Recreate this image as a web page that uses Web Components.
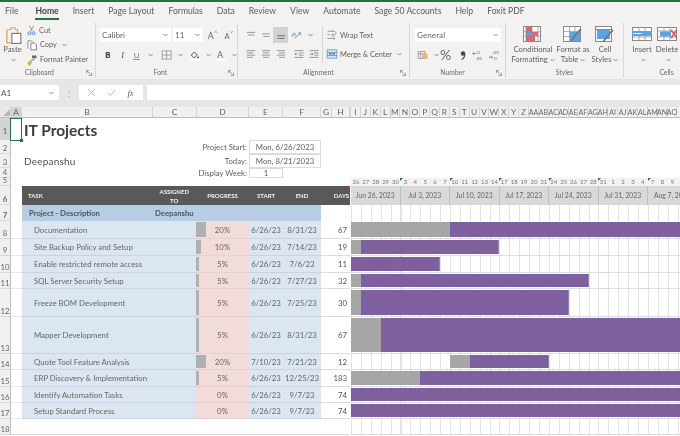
<!DOCTYPE html>
<html>
<head>
<meta charset="utf-8">
<title>IT Projects</title>
<style>
html,body{margin:0;padding:0;width:680px;height:436px;overflow:hidden;background:#fff}
body{font-family:Lato,"Open Sans",sans-serif;color:#5f5f5f;filter:blur(.3px)}
</style>
</head>
<body>
<excel-tabs></excel-tabs>
<excel-ribbon>
  <ribbon-group width="96" label="Clipboard" pad="16" launcher>
    <div style="display:flex;padding:0 0 0 2px">
      <big-btn icon="paste" label="Paste" sub=" " width="21" style="margin-top:2px"></big-btn>
      <div style="display:flex;flex-direction:column;margin-left:3px">
        <tool-btn icon="cut" label="Cut" height="14"></tool-btn>
        <tool-btn icon="copy" label="Copy" chevron height="15"></tool-btn>
        <tool-btn icon="painter" label="Format Painter" height="15"></tool-btn>
      </div>
    </div>
  </ribbon-group>
  <ribbon-group width="142" label="Font" pad="12" launcher>
    <div style="padding:5px 0 0 4px">
      <div style="display:flex;align-items:center;height:14px">
        <drop-box text="Calibri" width="71"></drop-box>
        <drop-box text="11" width="30" style="margin-left:2px"></drop-box>
        <tool-btn icon="growfont" width="16" height="14" style="margin-left:1px"></tool-btn>
        <tool-btn icon="shrinkfont" width="17" height="14"></tool-btn>
      </div>
      <div style="display:flex;align-items:center;height:16px;margin-top:5px">
        <tool-btn icon="bold" width="15" height="16"></tool-btn>
        <tool-btn icon="italic" width="15" height="16"></tool-btn>
        <tool-btn icon="underline" chevron width="24" height="16"></tool-btn>
        <tool-btn icon="borders" chevron width="29" height="16" style="margin-left:3px"></tool-btn>
        <tool-btn icon="fill" chevron width="27" height="16"></tool-btn>
        <tool-btn icon="fontcolor" chevron width="25" height="16"></tool-btn>
      </div>
    </div>
  </ribbon-group>
  <ribbon-group width="172" label="Alignment" pad="10" launcher>
    <div style="display:flex;padding:4px 0 0 5px">
      <div style="width:78px">
        <div style="display:flex;height:16px">
          <tool-btn icon="alignt" width="15" height="16"></tool-btn>
          <tool-btn icon="alignm" width="15" height="16"></tool-btn>
          <tool-btn icon="alignb" width="15" height="16" active></tool-btn>
          <tool-btn icon="orient" chevron width="24" height="16" style="margin-left:2px"></tool-btn>
        </div>
        <div style="display:flex;height:16px;margin-top:3px">
          <tool-btn icon="left" width="15" height="16"></tool-btn>
          <tool-btn icon="center" width="15" height="16"></tool-btn>
          <tool-btn icon="right" width="15" height="16"></tool-btn>
          <tool-btn icon="indentl" width="15" height="16" style="margin-left:3px"></tool-btn>
          <tool-btn icon="indentr" width="15" height="16"></tool-btn>
        </div>
      </div>
      <div style="border-left:1px solid #d4d4d4;margin-left:1px;padding-left:3px;height:36px">
        <tool-btn icon="wrap" label="Wrap Text" height="16"></tool-btn>
        <tool-btn icon="merge" label="Merge &amp; Center" chevron height="16" style="margin-top:3px"></tool-btn>
      </div>
    </div>
  </ribbon-group>
  <ribbon-group width="96" label="Number" pad="10" launcher>
    <div style="padding:5px 0 0 5px">
      <drop-box text="General" width="86"></drop-box>
      <div style="display:flex;height:16px;margin-top:5px">
        <tool-btn icon="money" chevron width="25" height="16"></tool-btn>
        <tool-btn icon="percent" width="15" height="16" size="15"></tool-btn>
        <tool-btn icon="comma" width="15" height="16"></tool-btn>
        <tool-btn icon="incdec" width="16" height="16"></tool-btn>
        <tool-btn icon="decdec" width="16" height="16"></tool-btn>
      </div>
    </div>
  </ribbon-group>
  <ribbon-group width="118" label="Styles">
    <div style="display:flex;padding:3px 0 0 7px">
      <big-btn icon="cond" label="Conditional" sub="Formatting" chevron width="40"></big-btn>
      <big-btn icon="fmttable" label="Format as" sub="Table" chevron width="40"></big-btn>
      <big-btn icon="cellstyles" label="Cell" sub="Styles" chevron width="24"></big-btn>
    </div>
  </ribbon-group>
  <ribbon-group width="86" label="Cells" last>
    <div style="display:flex;padding:3px 0 0 6px">
      <big-btn icon="insert" label="Insert" sub=" " width="24"></big-btn>
      <big-btn icon="delete" label="Delete" sub=" " width="26"></big-btn>
    </div>
  </ribbon-group>
</excel-ribbon>
<formula-bar></formula-bar>
<sheet-columns></sheet-columns>
<sheet-title></sheet-title>
<gantt-header></gantt-header>
<summary-row></summary-row>
<task-row n="8" h="18" task="Documentation" pct="20" start="6/26/23" end="8/31/23" days="67" done="10" rest="40"></task-row>
<task-row n="9" h="17" task="Site Backup Policy and Setup" pct="10" start="6/26/23" end="7/14/23" days="19" done="1" rest="14"></task-row>
<task-row n="10" h="17" task="Enable restricted remote access" pct="5" start="6/26/23" end="7/6/23" days="11" done="0" rest="9"></task-row>
<task-row n="11" h="16" task="SQL Server Security Setup" pct="5" start="6/26/23" end="7/27/23" days="32" done="1" rest="23"></task-row>
<task-row n="12" h="28" task="Freeze BOM Development" pct="5" start="6/26/23" end="7/25/23" days="30" done="1" rest="21"></task-row>
<task-row n="13" h="37" task="Mapper Development" pct="5" start="6/26/23" end="8/31/23" days="67" done="3" rest="40"></task-row>
<task-row n="14" h="16" task="Quote Tool Feature Analysis" pct="20" start="7/10/23" end="7/21/23" days="12" offset="10" done="2" rest="8"></task-row>
<task-row n="15" h="17" task="ERP Discovery &amp; Implementation" pct="5" start="6/26/23" end="12/25/23" days="183" done="7" rest="40"></task-row>
<task-row n="16" h="16" task="Identify Automation Tasks" pct="0" start="6/26/23" end="9/7/23" days="74" done="0" rest="40"></task-row>
<task-row n="17" h="16" task="Setup Standard Process" pct="0" start="6/26/23" end="9/7/23" days="74" done="0" rest="40"></task-row>
<task-row n="18" h="16"></task-row>
<script>
// icones du ruban, en 16x16
const ICONS = {
  paste: '<path d="M3 4h3V2.500h4V4h2v3" fill="none" stroke="#e2a35a"/><path d="M2.500 4v12h4" fill="none" stroke="#e2a35a" stroke-width="1.200"/><rect x="7" y="7.500" width="8" height="9" fill="#fff" stroke="#777"/>',
  cut: '<path d="M5 1l4 8M11 1L7 9" stroke="#777" fill="none"/><circle cx="5" cy="12" r="2.200" fill="none" stroke="#3f7fc4" stroke-width="1.300"/><circle cx="11" cy="12" r="2.200" fill="none" stroke="#3f7fc4" stroke-width="1.300"/>',
  copy: '<path d="M2.500 13V2.500h5l2 2" fill="none" stroke="#777"/><path d="M6.500 5.500h5l2.500 2.500v6.500H6.500z" fill="#fff" stroke="#666"/>',
  painter: '<path d="M8 2h6v3.500H8z" fill="#666"/><path d="M10.500 5.500v2.500H7l-1 2" fill="none" stroke="#666"/><path d="M2 11l4-2 2 2-2 4H3z" fill="#e5a24a"/>',
  growfont: '<text x="1" y="13" font-size="13" fill="#666" font-family="Lato">A</text><path d="M11 4l2-2 2 2" fill="none" stroke="#4a86c5"/>',
  shrinkfont: '<text x="2" y="13" font-size="11" fill="#666" font-family="Lato">A</text><path d="M10 2l2 2 2-2" fill="none" stroke="#4a86c5"/>',
  bold: '<text x="4" y="12.500" font-size="11" font-weight="700" fill="#444" font-family="Open Sans">B</text>',
  italic: '<text x="5.500" y="12.500" font-size="11" font-style="italic" fill="#555" font-family="Liberation Serif">I</text>',
  underline: '<text x="3.500" y="11.500" font-size="10.500" fill="#5d6f86" font-family="Open Sans">U</text><path d="M3 14h9" stroke="#5d6f86"/>',
  borders: '<rect x="1.500" y="2.500" width="12" height="11" fill="none" stroke="#8a8a8a"/><path d="M7.500 2.500v11M1.500 8h12" stroke="#8a8a8a"/>',
  fill: '<path d="M3 8l4-4 4 4-4 4z" fill="none" stroke="#555" stroke-width="1.300"/><path d="M12 9c1 1.500 1.500 2 1 3s-2 .500-2-.500z" fill="#555"/><path d="M1 14.500h14" stroke="#fff" stroke-width="2"/>',
  fontcolor: '<text x="3" y="12" font-size="11.500" fill="#666" font-family="Lato">A</text><path d="M1 14.500h14" stroke="#fff" stroke-width="2"/>',
  alignt: '<path d="M2.500 4.500h11M3.500 8h9" stroke="#7a7a7a" fill="none"/>',
  alignm: '<path d="M3 6.500h10M4.500 10h8" stroke="#7a7a7a" fill="none"/>',
  alignb: '<path d="M2.500 9h11M3.500 12.500h9" stroke="#666" stroke-width="1.200" fill="none"/>',
  orient: '<text x="1" y="9" font-size="6" fill="#666" font-family="Lato" transform="rotate(-25 4 9)">ab</text><path d="M5 12l7-6" stroke="#4a86c5" stroke-width="1.200"/><path d="M10 5h3v3" fill="none" stroke="#4a86c5"/>',
  left: '<path d="M2.500 3.500h11M2.500 6.500h8M2.500 9.500h11M2.500 12.500h8" stroke="#7a7a7a" fill="none"/>',
  center: '<path d="M2.500 3.500h11M4 6.500h8M2.500 9.500h11M4 12.500h8" stroke="#7a7a7a" fill="none"/>',
  right: '<path d="M2.500 3.500h11M5.500 6.500h8M2.500 9.500h11M5.500 12.500h8" stroke="#7a7a7a" fill="none"/>',
  indentl: '<path d="M2 3.500h12M8 6.500h6M8 9.500h6M2 12.500h12" stroke="#7a7a7a" fill="none"/><path d="M6.500 8H2.500M4 6.500L2.500 8 4 9.500" stroke="#4a86c5" fill="none"/>',
  indentr: '<path d="M2 3.500h12M8 6.500h6M8 9.500h6M2 12.500h12" stroke="#7a7a7a" fill="none"/><path d="M2 8h4.500M5 6.500L6.500 8 5 9.500" stroke="#4a86c5" fill="none"/>',
  wrap: '<path d="M2 3h9c3 0 3 5 0 5H8M9.500 6L7.500 8l2 2" fill="none" stroke="#5b8ec7"/><path d="M2 7.500h3M2 12.500h9" stroke="#777"/><path d="M8 1.500v2M11 11v3" stroke="#777"/>',
  merge: '<rect x="1.500" y="2.500" width="13" height="11" fill="#d7e6f6" stroke="#5b8ec7"/><path d="M1.500 6h13M1.500 10h13" stroke="#5b8ec7" fill="none"/><path d="M4 8h8M4 8l1.500-1.200M12 8l-1.500-1.200" stroke="#444" fill="none"/>',
  money: '<rect x="1.500" y="3.500" width="9" height="9" fill="none" stroke="#8a8a8a"/><path d="M1.500 6.500h9M5 3.500v9" stroke="#8a8a8a"/><rect x="7" y="6" width="7" height="7" fill="#f3b26b"/>',
  percent: '<text x="0" y="13" font-size="15" fill="#666" font-family="Lato">%</text>',
  comma: '<circle cx="8" cy="6" r="3" fill="#444"/><path d="M10.500 6.500C10.500 10 9 12.500 6 14" fill="none" stroke="#444" stroke-width="1.500"/>',
  incdec: '<path d="M1 6h5M1 6l2-2M1 6l2 2" stroke="#4a86c5" fill="none"/><text x="7" y="7" font-size="6" fill="#777" font-family="Lato">0</text><text x="5" y="14" font-size="6" fill="#777" font-family="Lato">.00</text>',
  decdec: '<path d="M1 11h5M6 11L4 9M6 11l-2 2" stroke="#4a86c5" fill="none"/><text x="6" y="7" font-size="6" fill="#777" font-family="Lato">.00</text><text x="8" y="14" font-size="6" fill="#777" font-family="Lato">0</text>',
  cond: '<rect x=".500" y=".500" width="17" height="15" fill="#fff" stroke="#8a8a8a"/><rect x="3" y="1" width="6" height="5" fill="#ee5f6c"/><rect x="3" y="6" width="6" height="4" fill="#5f9fe0"/><rect x="9" y="6" width="6" height="4" fill="#ee5f6c"/><rect x="3" y="10" width="9" height="5" fill="#ee5f6c"/><path d="M3 .500v15M9 .500v15M15 .500v15M.500 5.800h17M.500 10.200h17" stroke="#8a8a8a" stroke-width=".700"/>',
  fmttable: '<rect x=".500" y=".500" width="17" height="15" fill="#fff" stroke="#8a8a8a"/><path d="M6.500 .500v15M12 .500v15M.500 5.500h17M.500 10.500h17" stroke="#8a8a8a" stroke-width=".700"/><rect x="7" y="6" width="10" height="9" fill="#5ba2e6"/><path d="M8 15l7-9 3-3" stroke="#777" stroke-width="1.800" fill="none"/>',
  cellstyles: '<rect x=".500" y=".500" width="16" height="15" fill="#fff" stroke="#8a8a8a"/><rect x="2" y="4" width="13" height="9" fill="#5ba2e6"/><path d="M.500 3.500h16" stroke="#8a8a8a"/><path d="M8 16l7-9 3-3" stroke="#777" stroke-width="1.800" fill="none"/>',
  insert: '<rect x=".500" y="1.500" width="19" height="13" fill="#fff" stroke="#8a8a8a"/><path d="M7 1.500v13M13 1.500v13M.500 11h19" stroke="#8a8a8a" stroke-width=".700"/><rect x="0" y="5" width="20" height="5" fill="#5ba2e6"/><path d="M1 7.500h9" stroke="#fff"/>',
  'delete': '<rect x=".500" y="1.500" width="19" height="13" fill="#fff" stroke="#8a8a8a"/><path d="M7 1.500v13M13 1.500v13M.500 5h19M.500 11h19" stroke="#8a8a8a" stroke-width=".700"/><rect x="3" y="5.500" width="11" height="5" fill="#5ba2e6"/><path d="M14 4l6 8M20 4l-6 8" stroke="#e0574f" stroke-width="1.600"/>',
}

const CHEVRON = '<svg class="chev" width="5" height="4" viewBox="0 0 5 4"><path d="M.5 1l2 2 2-2" fill="none" stroke="#777" stroke-width=".8"/></svg>'

// colonnes communes aux lignes du tableau : entete, A, B+C, D, E, F, G+H, diagramme
const COLUMNS = '11px 11px 174px 53px 34px 38px 29px 1fr'
const DAY = 9.9

class ExcelTabs extends HTMLElement{
    constructor(){
        super()
        const root = this.attachShadow({mode: 'open'})
        const tabs = ['Insert','Page Layout','Formulas','Data','Review','View','Automate','Sage 50 Accounts','Help','Foxit PDF']
        root.innerHTML = `<style>
            :host{display:flex;height:18px;border-top:2px solid #217346;background:#f3f2f1;font-size:8.600px;color:#5c5c5c;padding-left:5px;gap:14px;align-items:center;white-space:nowrap}
            .home{position:relative;font-weight:700;color:#444;margin-left:3px}
            .home::after{content:"";position:absolute;left:0;right:0;bottom:-4px;height:2px;background:#217346}
        </style><span>File</span><span class="home">Home</span>${tabs.map(t => `<span>${t}</span>`).join('')}`
    }
}

class ExcelRibbon extends HTMLElement{
    constructor(){
        super()
        const root = this.attachShadow({mode: 'open'})
        root.innerHTML = `<style>
            :host{display:flex;height:59px;background:#f3f2f1;overflow:hidden;padding-top:3px;box-sizing:border-box}
        </style><slot></slot>`
    }
}

class RibbonGroup extends HTMLElement{
    constructor(){
        super()
        const root = this.attachShadow({mode: 'open'})
        const launcher = this.hasAttribute('launcher')
        root.innerHTML = `<style>
            :host{display:flex;flex-direction:column;flex:none;box-sizing:border-box;width:${this.getAttribute('width')}px;height:55px;border-right:1px solid ${this.hasAttribute('last') ? 'transparent' : '#d8d8d8'};color:#5f5f5f;position:relative}
            .body{flex:1}
            .label{height:11px;line-height:11px;text-align:center;font-size:6.800px;color:#6a6a6a;padding-right:${this.getAttribute('pad') || 0}px}
            svg{position:absolute;right:3px;bottom:2px}
        </style><div class="body"><slot></slot></div><div class="label">${this.getAttribute('label')}</div>
        ${launcher ? '<svg width="6" height="6" viewBox="0 0 6 6"><path d="M.5 3V.5H3M1 1l3.500 3.500M5.500 2.500v3H2.500" fill="none" stroke="#888" stroke-width=".8"/></svg>' : ''}`
    }
}

class ToolBtn extends HTMLElement{
    constructor(){
        super()
        const root = this.attachShadow({mode: 'open'})
        const w = this.getAttribute('width')
        const h = this.getAttribute('height') || 16
        const label = this.getAttribute('label')
        const size = this.getAttribute('size') || (h > 14 ? 12 : 11)
        root.innerHTML = `<style>
            :host{display:flex;align-items:center;justify-content:${w ? 'center' : 'flex-start'};flex:none;box-sizing:border-box;height:${h}px;${w ? `width:${w}px;` : ''}gap:2px;white-space:nowrap;font-size:7.400px;color:#5f5f5f;${this.hasAttribute('active') ? 'background:#d2d2d2;' : ''}}
            svg{display:block;flex:none;overflow:visible}
            .ch{margin-left:3px;display:flex}
        </style><svg width="${size}" height="${size}" viewBox="0 0 16 16">${ICONS[this.getAttribute('icon')] || ''}</svg>
        ${label ? `<span>${label}</span>` : ''}${this.hasAttribute('chevron') ? `<span class="ch">${CHEVRON}</span>` : ''}`
    }
}

class BigBtn extends HTMLElement{
    constructor(){
        super()
        const root = this.attachShadow({mode: 'open'})
        const icon = this.getAttribute('icon')
        const sub = this.getAttribute('sub')
        const paste = icon === 'paste'
        const vb = paste ? '0 0 16 17' : '0 0 20 16'
        root.innerHTML = `<style>
            :host{display:flex;flex-direction:column;align-items:center;flex:none;width:${this.getAttribute('width')}px;font-size:7.700px;line-height:10px;color:#5f5f5f;white-space:nowrap}
            .big{display:block;height:${paste ? 19 : 16}px;width:${paste ? 18 : 20}px;margin-bottom:${paste ? 0 : 2}px}
            .chev{display:block}
            .ch{display:inline-flex;vertical-align:middle;margin-left:2px}
            .line{height:10px}
        </style><svg class="big" viewBox="${vb}">${ICONS[icon]}</svg><div class="line">${this.getAttribute('label')}</div>
        <div class="line">${sub.trim() ? sub : ''}${this.hasAttribute('chevron') || !sub.trim() ? `<span class="ch">${CHEVRON}</span>` : ''}</div>`
    }
}

class DropBox extends HTMLElement{
    constructor(){
        super()
        const root = this.attachShadow({mode: 'open'})
        root.innerHTML = `<style>
            :host{display:flex;align-items:center;justify-content:space-between;flex:none;box-sizing:border-box;width:${this.getAttribute('width')}px;height:14px;background:#fff;padding:0 3px 0 2px;font-size:8.200px;color:#666}
        </style><span>${this.getAttribute('text')}</span>${CHEVRON}`
    }
}

class FormulaBar extends HTMLElement{
    constructor(){
        super()
        const root = this.attachShadow({mode: 'open'})
        root.innerHTML = `<style>
            :host{display:flex;height:28px;box-sizing:border-box;background:#e6e6e6;padding:6px 0 7px;font-size:8.200px;color:#555}
            div{background:#fff;height:15px;box-sizing:border-box;display:flex;align-items:center}
            .name{width:59px;padding:0 5px 0 1px;justify-content:space-between}
            .dots{width:20px;display:flex;justify-content:center;background:none;color:#aaa}
            .fx{width:64px;justify-content:space-around;padding:0 4px 0 2px}
            .input{flex:1;margin-left:4px}
            i{font-family:"Liberation Serif",serif;font-size:9px;color:#555}
        </style><div class="name"><span>A1</span>${CHEVRON}</div><div class="dots">⋮</div>
        <div class="fx">
          <svg width="9" height="9" viewBox="0 0 9 9"><path d="M1 1l7 7M8 1L1 8" stroke="#c2c2c2"/></svg>
          <svg width="9" height="9" viewBox="0 0 9 9"><path d="M1 5l2.500 2.500L8 2" stroke="#c2c2c2" fill="none"/></svg>
          <i>f<small>x</small></i>
        </div><div class="input"></div>`
    }
}

function columnName(i){
    return i < 26 ? String.fromCharCode(65 + i) : 'A' + String.fromCharCode(65 + i - 26)
}

class SheetColumns extends HTMLElement{
    constructor(){
        super()
        const root = this.attachShadow({mode: 'open'})
        const fixed = [['A',11,1],['B',131],['C',44],['D',52],['E',34],['F',38],['G',11],['H',18]]
        let days = ''
        for(let i = 8; i < 41; i++){
            days += `<span class="${i >= 26 ? 'two' : ''}" style="width:${DAY}px">${columnName(i)}</span>`
        }
        root.innerHTML = `<style>
            :host{display:flex;height:11px;background:#f0f0f0;border-bottom:1px solid #bdbdbd;box-sizing:border-box;font-size:8.400px;line-height:10px;color:#666;overflow:hidden}
            span{flex:none;box-sizing:border-box;text-align:center;border-right:1px solid #d4d4d4;white-space:nowrap;display:flex;justify-content:center}
            .two{font-size:7px}
            .corner{width:11px;background:#e9e9e9;position:relative}
            .corner svg{position:absolute;left:3px;top:2px}
            .sel{background:#d4d4d4}
        </style><span class="corner"><svg width="7" height="7" viewBox="0 0 7 7"><path d="M7 0v7H0z" fill="#b9b9b9"/></svg></span>
        ${fixed.map(c => `<span class="${c[2] ? 'sel' : ''}" style="width:${c[1]}px">${c[0]}</span>`).join('')}<span style="width:1px"></span>${days}`
    }
}

class RowHead extends HTMLElement{
    constructor(){
        super()
        const root = this.attachShadow({mode: 'open'})
        root.innerHTML = `<style>
            :host{display:flex;align-items:flex-end;justify-content:center;box-sizing:border-box;background:${this.hasAttribute('sel') ? '#d4d4d4' : '#f0f0f0'};border-right:1px solid #bdbdbd;border-bottom:1px solid #d8d8d8;font-size:7.800px;line-height:7px;padding-bottom:1px;color:#666}
        </style><slot></slot>`
    }
}

class SheetTitle extends HTMLElement{
    constructor(){
        super()
        const root = this.attachShadow({mode: 'open'})
        const groups = [[26,27,28,29,30],[3,4,5,6,7],[10,11,12,13,14],[17,18,19,20,21],[24,25,26,27,28],[31,1,2,3,4],[7,8,9]]
        const strip = groups.map(g => g.map((d, i) => `<span class="d${i === 0 && d !== 26 ? ' flag' : ''}">${d}</span>`).join('')).join('')
        root.innerHTML = `<style>
            :host{display:grid;grid-template-columns:${COLUMNS};grid-template-rows:22px 14px 14px 10px 8px;background:#fff;color:#5f5f5f;font-size:7.800px}
            row-head:nth-of-type(1){grid-area:1/1;padding-bottom:4px}
            row-head:nth-of-type(2){grid-area:2/1}
            row-head:nth-of-type(3){grid-area:3/1}
            row-head:nth-of-type(4){grid-area:4/1}
            row-head:nth-of-type(5){grid-area:5/1}
            .a1{grid-area:1/2;border:1.500px solid #217346;box-sizing:border-box;position:relative;margin:0 0 -1px -1px}
            .a1::after{content:"";position:absolute;right:-2px;bottom:-2px;width:3px;height:3px;background:#217346}
            .title{grid-area:1/3/1/8;font-size:15.500px;font-weight:700;color:#3c3c3c;line-height:24px;padding-left:2px;white-space:nowrap}
            .owner{grid-area:3/3;font-size:10px;color:#505050;padding-left:2px;line-height:15px;letter-spacing:.2px}
            .lab{grid-column:3/5;text-align:right;padding-right:2px;line-height:14px;white-space:nowrap}
            .box{grid-column:5/7;border:1px solid #dcdcdc;text-align:center;line-height:12px;box-sizing:border-box;white-space:nowrap}
            .week{grid-area:4/5;line-height:8px;border:1px solid #dcdcdc;text-align:center;box-sizing:border-box}
            .strip{grid-area:5/8;display:flex;background:#f2f2f2;overflow:hidden;font-size:6px;line-height:8px;color:#777;margin-left:1px}
            .d{flex:none;width:${DAY}px;text-align:center;position:relative}
            .flag::before{content:"";position:absolute;left:0;top:0;border-top:3px solid #217346;border-right:3px solid transparent}
        </style>
        <row-head sel>1</row-head><row-head>2</row-head><row-head>3</row-head><row-head>4</row-head><row-head>5</row-head>
        <div class="a1"></div>
        <div class="title">IT Projects</div>
        <div class="lab" style="grid-row:2">Project Start:</div><div class="box" style="grid-row:2">Mon, 6/26/2023</div>
        <div class="owner">Deepanshu</div>
        <div class="lab" style="grid-row:3">Today:</div><div class="box" style="grid-row:3">Mon, 8/21/2023</div>
        <div class="lab" style="grid-row:4;line-height:10px">Display Week:</div><div class="week">1</div>
        <div class="strip">${strip}</div>`
    }
}

class GanttHeader extends HTMLElement{
    constructor(){
        super()
        const root = this.attachShadow({mode: 'open'})
        const weeks = ['Jun 26, 2023','Jul 3, 2023','Jul 10, 2023','Jul 17, 2023','Jul 24, 2023','Jul 31, 2023','Aug 7, 2023']
        root.innerHTML = `<style>
            :host{display:grid;grid-template-columns:${COLUMNS};height:19px;font-size:6px;font-weight:700;color:#f2f2f2}
            .c{background:#595959;display:flex;align-items:center;justify-content:center;text-align:center;line-height:9px;white-space:nowrap}
            .task{justify-content:space-between;padding:0 7px 0 6px}
            .days{position:relative}
            .days::after{content:"";position:absolute;right:0;top:0;border-top:3px solid #e0332e;border-left:3px solid transparent}
            .weeks{display:flex;background:#d9d9d9;overflow:hidden;margin-left:1px;font-weight:400;font-size:6.800px;color:#666;white-space:nowrap}
            .weeks span{flex:none;box-sizing:border-box;width:${DAY * 5}px;border-right:1px solid #bfbfbf;text-align:center;line-height:18px}
        </style>
        <row-head>6</row-head><div></div>
        <div class="c task"><span>TASK</span><span>ASSIGNED<br>TO</span></div>
        <div class="c">PROGRESS</div><div class="c">START</div><div class="c">END</div><div class="c days" style="justify-content:flex-end;padding-right:1px">DAYS</div>
        <div class="weeks">${weeks.map(w => `<span>${w}</span>`).join('')}</div>`
    }
}

class SummaryRow extends HTMLElement{
    constructor(){
        super()
        const root = this.attachShadow({mode: 'open'})
        root.innerHTML = `<style>
            :host{display:grid;grid-template-columns:${COLUMNS};height:16px;font-size:7.700px;font-weight:700;color:#4a5664}
            .blue{grid-column:3/7;background:#b8cce4;display:flex;align-items:center;padding-left:7px;white-space:nowrap}
            .track{grid-column:8;margin-left:1px;background:repeating-linear-gradient(90deg,#e4e4e4 0 1px,#fff 1px ${DAY}px)}
        </style>
        <row-head>7</row-head><div></div><div class="blue"><span style="width:126px">Project - Description</span><span>Deepanshu</span></div>
        <div class="track"></div>`
    }
}

class TaskRow extends HTMLElement{
    constructor(){
        super()
        const root = this.attachShadow({mode: 'open'})
        const n = this.getAttribute('n')
        const h = this.getAttribute('h')
        const task = this.getAttribute('task')
        const grid = `.track{grid-column:8;margin-left:1px;display:flex;box-sizing:border-box;padding:1px 0;border-bottom:1px solid #dcdcdc;overflow:hidden;background:repeating-linear-gradient(90deg,#e4e4e4 0 1px,#fff 1px ${DAY}px)}`
        if(!task){
            // ligne vide sous le tableau
            root.innerHTML = `<style>
                :host{display:grid;grid-template-columns:${COLUMNS};height:${h}px}
                .line{grid-column:2/8;border-bottom:1px solid #d8d8d8}
                ${grid}
            </style><row-head>${n}</row-head><div class="line"></div><div class="track"></div>`
            return
        }
        const pct = +this.getAttribute('pct')
        const offset = +this.getAttribute('offset') || 0
        const done = +this.getAttribute('done')
        const rest = +this.getAttribute('rest')
        root.innerHTML = `<style>
            :host{display:grid;grid-template-columns:${COLUMNS};height:${h}px;font-size:7.800px;color:#666;white-space:nowrap}
            .cell{display:flex;align-items:center;justify-content:center;box-sizing:border-box;border-bottom:1px solid #c8d4e2;background:#dce6f1}
            .name{padding-left:12px;justify-content:flex-start}
            .pct{background:#f2dcdb;border-bottom-color:#e9d0cf;position:relative}
            .pct i{position:absolute;left:0;top:1px;bottom:1px;background:#b0b0b0;width:${pct / 2}px}
            .days{background:#fff;justify-content:flex-end;padding-right:3px;border-bottom-color:#dcdcdc;color:#555}
            .sp{grid-column:2;border-bottom:1px solid #e6e6e6}
            ${grid}
            .bar{flex:none}
            .gray{background:#a6a6a6}
            .purple{background:#7f609f;box-shadow:inset -1px 0 #9a80b5}
        </style>
        <row-head>${n}</row-head><div class="sp"></div>
        <div class="cell name">${task}</div>
        <div class="cell pct"><i></i>${pct}%</div>
        <div class="cell">${this.getAttribute('start')}</div>
        <div class="cell">${this.getAttribute('end')}</div>
        <div class="cell days">${this.getAttribute('days')}</div>
        <div class="track">
          <span class="bar" style="width:${offset * DAY}px"></span>
          <span class="bar gray" style="width:${done * DAY}px"></span>
          <span class="bar purple" style="width:${rest * DAY}px"></span>
        </div>`
    }
}

customElements.define('row-head', RowHead)
customElements.define('excel-tabs', ExcelTabs)
customElements.define('excel-ribbon', ExcelRibbon)
customElements.define('ribbon-group', RibbonGroup)
customElements.define('tool-btn', ToolBtn)
customElements.define('big-btn', BigBtn)
customElements.define('drop-box', DropBox)
customElements.define('formula-bar', FormulaBar)
customElements.define('sheet-columns', SheetColumns)
customElements.define('sheet-title', SheetTitle)
customElements.define('gantt-header', GanttHeader)
customElements.define('summary-row', SummaryRow)
customElements.define('task-row', TaskRow)
</script>
</body>
</html>
